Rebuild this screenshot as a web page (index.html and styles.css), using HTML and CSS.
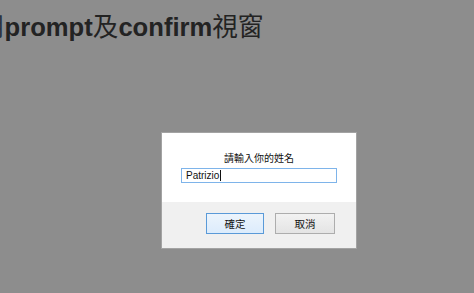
FILE: index.html
```html
<!DOCTYPE html>
<html lang="zh-Hant">
<head>
    <meta charset="UTF-8">
    <meta name="viewport" content="width=device-width, initial-scale=1.0">
    <title>prompt及confirm視窗</title>
    <link rel="stylesheet" href="styles.css">
</head>
<body>
    <h1 class="title"><span class="cjk cut">用</span>prompt<span class="cjk">及</span>confirm<span class="cjk">視窗</span></h1>

    <div class="dialog">
        <div class="dialog-body">
            <div class="dialog-label">請輸入你的姓名</div>
            <div class="dialog-input">Patrizio<span class="caret"></span></div>
        </div>
        <div class="dialog-footer">
            <button class="btn btn-ok">確定</button>
            <button class="btn btn-cancel">取消</button>
        </div>
    </div>
</body>
</html>
```

FILE: styles.css
```css
body { margin: 0; background: #8d8d8d; font-family: "Liberation Sans", Arial, "Noto Sans CJK TC", sans-serif; overflow: hidden; height: 293px; }
.title { margin: 0; padding-top: 10px; padding-left: 2px; font-size: 25.6px; line-height: 30px; font-weight: bold; color: #232323; white-space: nowrap; }
.cjk { font-family: "Noto Sans CJK TC", sans-serif; font-weight: normal; }
.cut { margin-left: -23px; color: #2a3340; }

.dialog { position: absolute; left: 161px; top: 132px; width: 194px; border: 1px solid #a3a3a3; background: #fff; }
.dialog-body { padding: 19px 19px 19px; }
.dialog-label { font-family: "Noto Sans CJK TC", sans-serif; font-size: 10px; line-height: 12px; text-align: center; color: #111; margin-bottom: 4px; }
.dialog-input { height: 13px; border: 1px solid #7eb4ea; font-size: 10px; line-height: 13px; padding-left: 4px; color: #111; }
.caret { display: inline-block; width: 1px; height: 11px; background: #111; vertical-align: -2px; margin-left: 1px; }

.dialog-footer { height: 46px; background: #f0f0f0; display: flex; justify-content: flex-end; align-items: flex-start; gap: 11px; padding: 11px 21px 0 0; box-sizing: border-box; }
.btn { height: 21px; font-family: "Noto Sans CJK TC", sans-serif; font-size: 10.5px; color: #111; border: 1px solid #adadad; background: linear-gradient(#f2f2f2, #e4e4e4); padding: 0; }
.btn-ok { width: 58px; border-color: #5a9ad8; background: linear-gradient(#ecf4fc, #dcecfc); }
.btn-cancel { width: 60px; }
```
